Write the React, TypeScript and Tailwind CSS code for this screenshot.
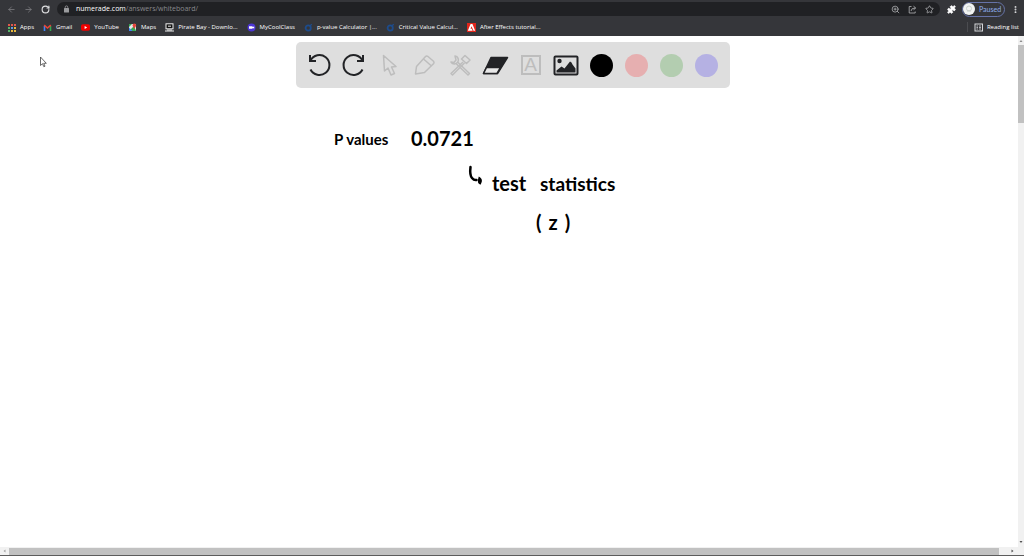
import type { ReactNode } from "react";
import { ArrowLeft, ArrowRight, MoreVertical, Puzzle, RotateCw, Star, ZoomIn } from "lucide-react";

const bookmarks: { label: string; icon: ReactNode }[] = [
  {
    label: "Apps",
    icon: (
      <svg viewBox="0 0 9 9" className="size-[9px]">
        <path fill="#e0584c" d="M1 1h2v2H1zM4 1h2v2H4zM7 1h2v2H7z" />
        <path fill="#58b368" d="M1 4h2v2H1zM1 7h2v2H1z" />
        <path fill="#5b9be6" d="M4 4h2v2H4z" />
        <path fill="#e8b73c" d="M7 4h2v2H7zM4 7h2v2H4zM7 7h2v2H7z" />
      </svg>
    ),
  },
  {
    label: "Gmail",
    icon: (
      <svg viewBox="0 0 9 9" className="size-[9px]" fill="none" strokeWidth="1.6">
        <path stroke="#4285f4" d="M1.5 3v5" />
        <path stroke="#34a853" d="M7.5 3v5" />
        <path stroke="#ea4335" d="M1.2 2.2 4.5 5l3.3-2.8" />
      </svg>
    ),
  },
  {
    label: "YouTube",
    icon: (
      <svg viewBox="0 0 9 9" className="size-[9px]">
        <rect y="1.3" width="9" height="6.4" rx="1.8" fill="#f00000" />
        <path d="M3.6 3v3l2.6-1.5z" fill="#fff" />
      </svg>
    ),
  },
  {
    label: "Maps",
    icon: (
      <svg viewBox="0 0 9 9" className="size-[9px]">
        <path d="M1 1h7v7H1z" fill="#e9e9e9" />
        <path d="M1 1h3L1 4z" fill="#34a853" />
        <path d="M1 8 6 3l2 5z" fill="#34a853" />
        <path d="M1 4.5 4.5 8H1z" fill="#4285f4" />
        <path d="M6.3 6 4.7 3a1.8 1.8 0 1 1 3.3 0z" fill="#e5443a" />
      </svg>
    ),
  },
  {
    label: "Pirate Bay - Downlo...",
    icon: (
      <svg viewBox="0 0 9 9" className="size-[9px]">
        <rect x="1" y=".8" width="7" height="5" fill="#111" stroke="#eee" />
        <path d="M3 3.2h3" stroke="#eee" />
        <path d="M0 8h9M2 7h5" stroke="#eee" />
      </svg>
    ),
  },
  {
    label: "MyCoolClass",
    icon: (
      <svg viewBox="0 0 9 9" className="size-[9px]">
        <circle cx="4.5" cy="4.5" r="4" fill="#4c35d4" />
        <path d="M2 3.3h3.5v.8L7.2 3.5v2l-1.7-.6v.8H2z" fill="#fff" />
      </svg>
    ),
  },
  { label: "p-value Calculator |...", icon: <OmniIcon /> },
  { label: "Critical Value Calcul...", icon: <OmniIcon /> },
  {
    label: "After Effects tutorial...",
    icon: (
      <svg viewBox="0 0 9 9" className="size-[9px]">
        <rect width="9" height="9" fill="#e1251b" />
        <path d="M.8 7.8 3.6 1h1.8l2.8 6.8H6.5L4.5 3.2 3.5 5.7h1.3l.8 2.1z" fill="#fff" />
      </svg>
    ),
  },
];

const colors = [
  { name: "Black", className: "bg-black" },
  { name: "Red", className: "bg-[#e6afb0]" },
  { name: "Green", className: "bg-[#b3cdb0]" },
  { name: "Purple", className: "bg-[#b5b1e3]" },
];

function OmniIcon() {
  return (
    <svg viewBox="0 0 9 9" className="size-[9px]" fill="none" stroke="#1d4c8c">
      <circle cx="4.2" cy="5" r="2.6" strokeWidth="1.8" />
      <path d="m6 2.8 1.8-1.6" strokeWidth="1.2" />
    </svg>
  );
}

function Tool({ label, children }: { label: string; children: ReactNode }) {
  return (
    <button type="button" aria-label={label} className="flex size-7 items-center justify-center">
      {children}
    </button>
  );
}

function BrowserBar() {
  return (
    <header className="shrink-0 bg-[#35363a] text-[7px] leading-[10px] text-[#dfe0e2]">
      {/* Address row */}
      <div className="flex h-[18px] items-center pr-1 pl-[7px]">
        <nav className="flex w-[50px] shrink-0 gap-2">
          <button type="button" aria-label="Back">
            <ArrowLeft className="size-[9px] text-[#818286]" />
          </button>
          <button type="button" aria-label="Forward">
            <ArrowRight className="size-[9px] text-[#818286]" />
          </button>
          <button type="button" aria-label="Reload">
            <RotateCw className="size-[9px]" strokeWidth={3} />
          </button>
        </nav>

        <div className="flex h-[14px] min-w-0 flex-1 items-center rounded-full bg-[#202124] px-1.5">
          <svg viewBox="0 0 7 8" className="mr-1.5 h-2 w-[7px] shrink-0">
            <rect x="1" y="3" width="5" height="4.5" rx=".5" fill="#9a9b9e" />
            <path d="M2.2 3.5V2.2a1.3 1.3 0 0 1 2.6 0v1.3" fill="none" stroke="#9a9b9e" strokeWidth=".8" />
          </svg>
          <label htmlFor="address" className="text-white">
            numerade.com
          </label>
          <input
            id="address"
            defaultValue="/answers/whiteboard/"
            className="min-w-0 flex-1 bg-transparent text-[#88898c] outline-none"
          />
          <div className="flex shrink-0 gap-2 text-[#b4b5b8]">
            <button type="button" aria-label="Zoom">
              <ZoomIn className="size-[9px]" />
            </button>
            <button type="button" aria-label="Share">
              <svg viewBox="0 0 9 9" className="size-[9px]" fill="none" stroke="currentColor" strokeWidth=".8">
                <path d="M3.5 1.5H1.2v6.5h6V6.5" />
                <path d="M3 6q.3-3 4-3M5.5 1.2 7.8 3 5.5 4.8" />
              </svg>
            </button>
            <button type="button" aria-label="Bookmark">
              <Star className="size-[9px]" />
            </button>
          </div>
        </div>

        <button type="button" aria-label="Extensions" className="ml-[7px]">
          <Puzzle className="size-[9px] fill-white text-white" />
        </button>
        <button
          type="button"
          className="ml-1.5 flex h-[15px] w-[43px] items-center gap-1 rounded-full border border-[#6673a8] font-['Lato',sans-serif] text-[#8fb0ee]"
        >
          <svg viewBox="0 0 12 12" className="size-3">
            <circle cx="6" cy="6" r="6" fill="#f1f3f2" />
            <circle cx="6" cy="5.5" r="2.5" fill="none" stroke="#c9cfcb" />
            <path d="M4.5 8.5 6 7.5l1.5 1" stroke="#c9cfcb" fill="none" />
          </svg>
          Paused
        </button>
        <button type="button" aria-label="Menu" className="ml-1.5">
          <MoreVertical className="size-[9px]" strokeWidth={3} />
        </button>
      </div>

      {/* Bookmarks */}
      <div className="flex h-[18px] items-center justify-between pr-[5px] pl-[7px] text-[6px] text-white">
        <nav className="flex items-center gap-[9px]">
          {bookmarks.map(({ label, icon }) => (
            <a key={label} href="#" className="flex items-center gap-1 whitespace-nowrap">
              {icon}
              {label}
            </a>
          ))}
        </nav>
        <button type="button" className="flex items-center gap-1 border-l border-[#4b4c50] pl-1.5">
          <svg viewBox="0 0 9 9" className="size-[9px]" fill="none" stroke="#d6d7da">
            <rect x="1" y="1" width="7.5" height="7" />
            <path d="M2.5 3h1.5M5 3h2M2.5 4.5h1.5M5 4.5h2M2.5 6h1.5M5 6h2" strokeWidth=".8" />
          </svg>
          Reading list
        </button>
      </div>
    </header>
  );
}

function Toolbar() {
  return (
    <div className="flex h-[46px] w-[434px] items-center justify-between rounded-[5px] bg-[#dedede] px-[9px]">
      <Tool label="Undo">
        <svg viewBox="0 0 28 28" className="size-7" fill="none" stroke="#222326" strokeWidth="2">
          <path d="M5.5 9.5A10 10 0 1 1 5.5 18.5" />
          <path d="M5 4v6h6" />
        </svg>
      </Tool>
      <Tool label="Redo">
        <svg viewBox="0 0 28 28" className="size-7" fill="none" stroke="#222326" strokeWidth="2">
          <path d="M22.5 9.5A10 10 0 1 0 22.5 18.5" />
          <path d="M23 4v6h-6" />
        </svg>
      </Tool>
      <Tool label="Select">
        <svg viewBox="0 0 28 28" className="size-7" fill="none" stroke="#bdbdbd" strokeWidth="1.5" strokeLinejoin="round">
          <path d="M7.5 4.5 8.5 20l3.5-3 3 7 3.5-1.5-3-6.5 4.5-.5z" />
        </svg>
      </Tool>
      <Tool label="Pen">
        <svg viewBox="0 0 28 28" className="size-7" fill="none" stroke="#bdbdbd" strokeWidth="1.5" strokeLinejoin="round">
          <path d="M4.5 23 5.5 15.5 14.5 5.5q1-1 2.2-.2l5.8 5q1 1 .2 2.2L13.5 21.5z" />
          <path d="m12.5 8 8 7" />
        </svg>
      </Tool>
      <Tool label="Tools">
        <svg viewBox="0 0 28 28" className="size-7" fill="none" stroke="#bdbdbd" strokeWidth="1.5" strokeLinejoin="round">
          <path d="M9 5a4 4 0 1 1-4 6l3 .5L10 9z" />
          <path d="m11.5 11 12 11.5-1.5 1.5L10 12.5" />
          <path d="M15.5 8 19 4.5l5 4.5-3.5 3.5z" />
          <path d="M17 11 5 22.5l1.5 1.5L18.5 12" />
        </svg>
      </Tool>
      <Tool label="Eraser">
        <svg viewBox="0 0 28 28" className="size-7" stroke="#222326" strokeWidth="1.5" strokeLinejoin="round">
          <path d="M2.5 22.5 10 6.5h16.5L16.5 22.5z" fill="#222326" />
          <path d="M2.5 22.5 5.5 16.5H19.5L16 22.5z" fill="#e8e8e8" />
        </svg>
      </Tool>
      <Tool label="Text">
        <span className="flex size-5 items-center justify-center border-2 border-[#bdbdbd] font-['Liberation_Sans',sans-serif] text-[19px] leading-5 text-[#bdbdbd]">
          A
        </span>
      </Tool>
      <Tool label="Image">
        <svg viewBox="0 0 28 28" className="size-7" fill="#222326">
          <rect x="2.5" y="5.5" width="23" height="18" rx="1" fill="none" stroke="#222326" strokeWidth="2" />
          <circle cx="7.5" cy="10" r="2.2" />
          <path d="M4.5 21.5v-2l5-4 3 2 5.5-7 1.5 1 1 2 3 4v4z" />
        </svg>
      </Tool>
      {colors.map(({ name, className }) => (
        <Tool key={name} label={name}>
          <span className={`size-[23px] rounded-full ${className}`} />
        </Tool>
      ))}
    </div>
  );
}

function Ink() {
  return (
    <div className="font-['Lato',sans-serif] leading-6 font-bold whitespace-nowrap text-black">
      <span className="absolute top-[91px] left-[334px] text-[15px]">P values</span>
      <span className="absolute top-[90px] left-[411px] text-[20px]">0.0721</span>
      {/* Hook from the number down to the next line */}
      <svg viewBox="0 0 16 24" className="absolute top-[128px] left-[468px] h-6 w-4" fill="none" stroke="#000" strokeWidth="2.5" strokeLinecap="round">
        <path d="M2.5 3q-1 8 1.500 11 2 2.500 4.500 2" />
        <path d="M11.500 14.500q2 1.500 .500 4.500-1.500-1-.500-4.500z" />
      </svg>
      <span className="absolute top-[135px] left-[492px] text-[20px]">test</span>
      <span className="absolute top-[136px] left-[540px] text-[19px]">statistics</span>
      <span className="absolute top-[174px] left-[536px] flex gap-[7px] text-[20px]">
        <span>(</span>
        <span>z</span>
        <span>)</span>
      </span>
    </div>
  );
}

export default function App() {
  return (
    <div className="flex h-screen flex-col overflow-hidden border-b border-[#5c5c5c] bg-white font-['Open_Sans',sans-serif]">
      <BrowserBar />

      <div className="flex min-h-0 flex-1">
        <main className="relative min-w-0 flex-1">
          <div className="flex justify-center pt-1.5 pl-2">
            <Toolbar />
          </div>
          <Ink />
          <svg viewBox="0 0 8 12" className="absolute top-5 left-[39px] h-3 w-2">
            <path d="M1.5 1v8.5l2-1.8 1.3 3 1.2-.5-1.3-2.9h2.6z" fill="#fff" stroke="#444" strokeWidth=".8" />
          </svg>
        </main>

        {/* Vertical scrollbar */}
        <div className="flex w-1.5 shrink-0 flex-col items-center bg-[#f1f1f1]">
          <svg viewBox="0 0 6 9" className="h-[9px] w-1.5">
            <path d="m1.5 6 1.5-2 1.5 2z" fill="#8a8a8a" />
          </svg>
          <div className="h-[78px] w-full bg-[#c1c1c1]" />
          <svg viewBox="0 0 6 9" className="mt-auto h-[9px] w-1.5">
            <path d="m1.5 3 1.5 2 1.5-2z" fill="#505050" />
          </svg>
        </div>
      </div>

      {/* Horizontal scrollbar */}
      <div className="flex h-2 shrink-0 items-center bg-[#f1f1f1] pr-1.5">
        <svg viewBox="0 0 9 8" className="h-2 w-[9px]">
          <path d="M5.5 2.5v3l-2-1.5z" fill="#a3a3a3" />
        </svg>
        <div className="h-[7px] flex-1 bg-[#c1c1c1]" />
        <svg viewBox="0 0 19 8" className="h-2 w-[19px]">
          <path d="M12.5 2.5v3l2-1.5z" fill="#505050" />
        </svg>
      </div>
    </div>
  );
}
